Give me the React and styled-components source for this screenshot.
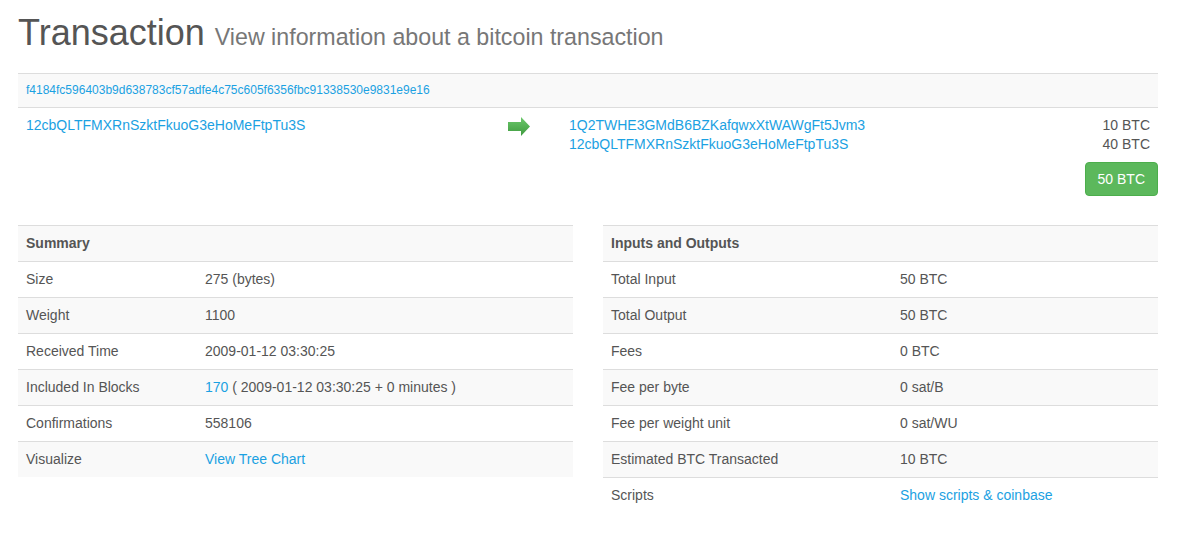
import React from "react";
import styled, { createGlobalStyle } from "styled-components";

const Global = createGlobalStyle`
  html, body { margin: 0; padding: 0; background: #fff; }
  body {
    font-family: "Liberation Sans", Arial, Helvetica, sans-serif;
    font-size: 14px;
    line-height: 1.42857;
    color: #555;
  }
  * { box-sizing: border-box; }
`;

const Container = styled.div`
  width: 1140px;
  margin-left: 18px;
`;

const Title = styled.h1`
  margin: 13px 0 20px;
  font-size: 36px;
  font-weight: 400;
  line-height: 1.1;
  color: #555;
`;

const Sub = styled.small`
  font-size: 64.5%;
  color: #777;
  font-weight: 400;
`;

const Link = styled.a`
  color: #1ba1e2;
  text-decoration: none;
  cursor: pointer;
`;

const HashRow = styled.div`
  background: #f9f9f9;
  border-top: 1px solid #ddd;
  border-bottom: 1px solid #ddd;
  padding: 8px;
  font-size: 12px;
  line-height: 17px;
`;

const TxRow = styled.div`
  display: grid;
  grid-template-columns: 482px 61px 1fr;
`;

const Cell = styled.div`
  padding: 8px;
`;

const ArrowCell = styled.div`
  padding: 9px 8px 0;
`;

const OutLine = styled.div`
  display: flex;
  justify-content: space-between;
  line-height: 19px;
`;

const Amount = styled.span`
  color: #555;
`;

const ButtonRow = styled.div`
  display: flex;
  justify-content: flex-end;
`;

const TotalButton = styled.button`
  font-family: inherit;
  font-size: 14px;
  line-height: 20px;
  padding: 6px 12px;
  color: #fff;
  background: #5cb85c;
  border: 1px solid #4cae4c;
  border-radius: 4px;
`;

const Columns = styled.div`
  display: grid;
  grid-template-columns: 555px 555px;
  column-gap: 30px;
  margin-top: 29px;
  align-items: start;
`;

const Table = styled.table`
  width: 100%;
  border-collapse: collapse;
  border-spacing: 0;
  table-layout: fixed;
  & tbody tr:nth-child(odd) { background: #f9f9f9; }
`;

const Th = styled.th`
  text-align: left;
  font-weight: 700;
  color: #555;
  padding: 7px 8px 8px;
  line-height: 20px;
  border-top: 1px solid #ddd;
`;

const Td = styled.td`
  padding: 7px 8px 8px;
  line-height: 20px;
  border-top: 1px solid #ddd;
  vertical-align: top;
`;

function Arrow() {
  return (
    <svg width="22" height="19" viewBox="0 0 22 19">
      <defs>
        <linearGradient id="ag" x1="0" y1="0" x2="0" y2="1">
          <stop offset="0" stopColor="#6cc96c" />
          <stop offset="1" stopColor="#3f9a3f" />
        </linearGradient>
      </defs>
      <path d="M0 5 H13 V0 L22 9.5 L13 19 V14 H0 Z" fill="url(#ag)" />
    </svg>
  );
}

function InfoTable({ title, first, rows }) {
  return (
    <Table>
      <colgroup>
        <col style={{ width: first }} />
        <col />
      </colgroup>
      <tbody>
        <tr>
          <Th colSpan={2}>{title}</Th>
        </tr>
        {rows.map(([k, v], i) => (
          <tr key={i}>
            <Td>{k}</Td>
            <Td>{v}</Td>
          </tr>
        ))}
      </tbody>
    </Table>
  );
}

export default function App() {
  const summary = [
    ["Size", "275 (bytes)"],
    ["Weight", "1100"],
    ["Received Time", "2009-01-12 03:30:25"],
    [
      "Included In Blocks",
      <>
        <Link>170</Link> ( 2009-01-12 03:30:25 + 0 minutes )
      </>,
    ],
    ["Confirmations", "558106"],
    ["Visualize", <Link>View Tree Chart</Link>],
  ];
  const io = [
    ["Total Input", "50 BTC"],
    ["Total Output", "50 BTC"],
    ["Fees", "0 BTC"],
    ["Fee per byte", "0 sat/B"],
    ["Fee per weight unit", "0 sat/WU"],
    ["Estimated BTC Transacted", "10 BTC"],
    ["Scripts", <Link>Show scripts &amp; coinbase</Link>],
  ];
  return (
    <>
      <Global />
      <Container>
        <Title>
          Transaction <Sub>View information about a bitcoin transaction</Sub>
        </Title>
        <HashRow>
          <Link>f4184fc596403b9d638783cf57adfe4c75c605f6356fbc91338530e9831e9e16</Link>
        </HashRow>
        <TxRow>
          <Cell>
            <Link>12cbQLTFMXRnSzktFkuoG3eHoMeFtpTu3S</Link>
          </Cell>
          <ArrowCell>
            <Arrow />
          </ArrowCell>
          <Cell>
            <OutLine>
              <Link>1Q2TWHE3GMdB6BZKafqwxXtWAWgFt5Jvm3</Link>
              <Amount>10 BTC</Amount>
            </OutLine>
            <OutLine>
              <Link>12cbQLTFMXRnSzktFkuoG3eHoMeFtpTu3S</Link>
              <Amount>40 BTC</Amount>
            </OutLine>
          </Cell>
        </TxRow>
        <ButtonRow>
          <TotalButton>50 BTC</TotalButton>
        </ButtonRow>
        <Columns>
          <InfoTable title="Summary" first={179} rows={summary} />
          <InfoTable title="Inputs and Outputs" first={289} rows={io} />
        </Columns>
      </Container>
    </>
  );
}
